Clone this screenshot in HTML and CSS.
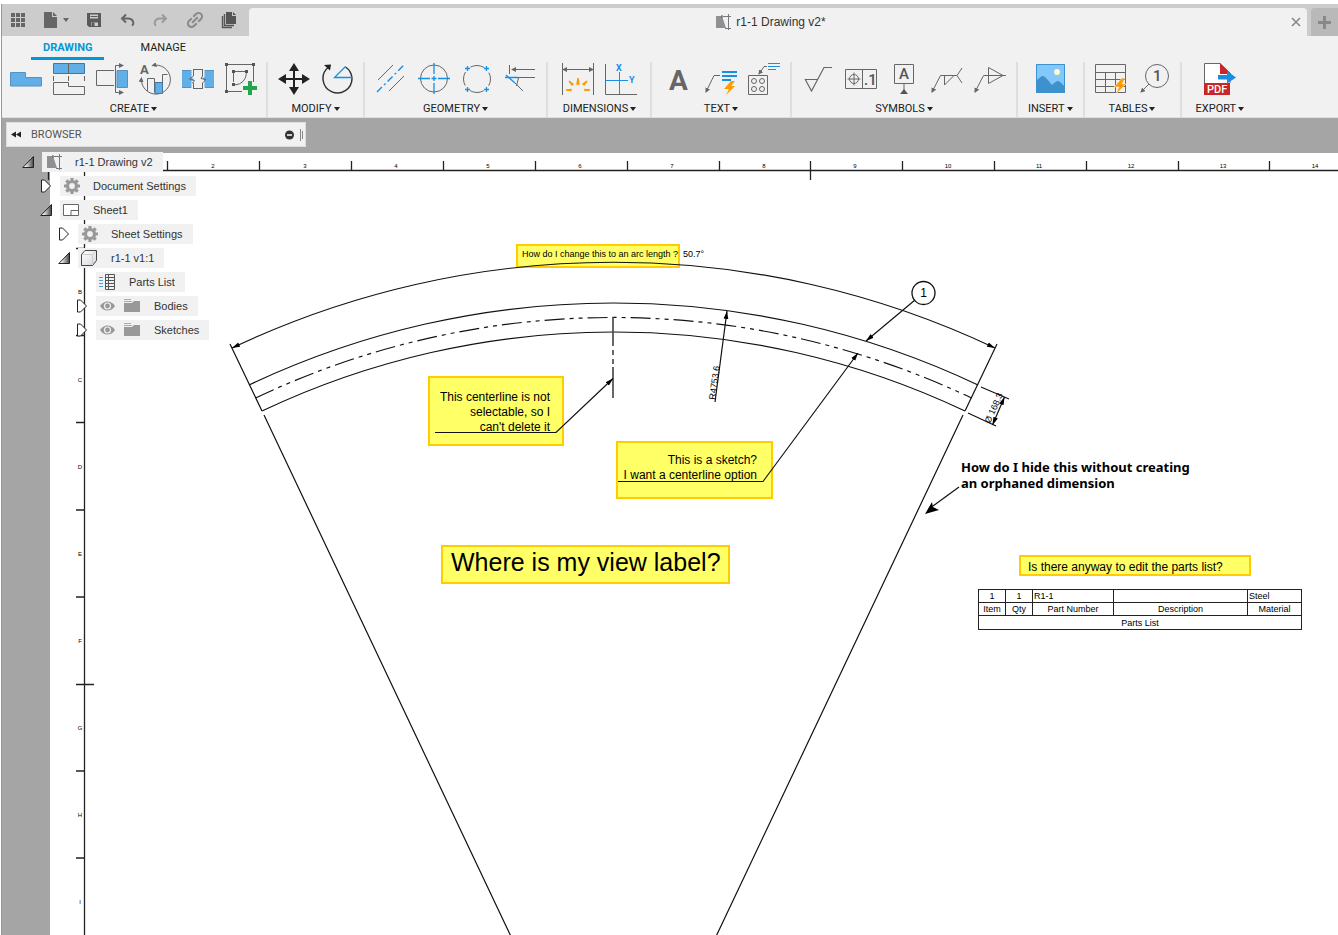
FILE: index.html
```html
<!DOCTYPE html>
<html lang="en">
<head>
<meta charset="utf-8">
<title>r1-1 Drawing v2*</title>
<link rel="stylesheet" href="styles.css">
</head>
<body>
<svg class="defs" width="0" height="0" aria-hidden="true">
  <defs>
    <linearGradient id="shade" x1="0" y1="0" x2="1" y2="0"><stop offset="0.2" stop-color="#fff"/><stop offset="1" stop-color="#444"/></linearGradient>
    <linearGradient id="cubeface" x1="0" y1="0" x2="1" y2="1"><stop offset="0" stop-color="#fff"/><stop offset="1" stop-color="#d3d6da"/></linearGradient>
    <marker id="arrow" markerUnits="userSpaceOnUse" markerWidth="10" markerHeight="8" refX="8" refY="3" orient="auto-start-reverse"><path d="M0 .6 8 3 0 5.4z" fill="#000"/></marker>
    <marker id="tip" markerUnits="userSpaceOnUse" markerWidth="6" markerHeight="6" refX="4" refY="2.5" orient="auto-start-reverse"><path d="M0 0 5 2.5 0 5z" fill="#666"/></marker>
    <symbol id="i-drawing" viewBox="0 0 18 18"><path d="M2 3h6l4 12H2z" fill="#8f9094"/><path d="M9 3.500h8M14.500 1v16M11 15.500h6" fill="none" stroke="#77787b"/><path d="M8 2v3" stroke="#555"/></symbol>
    <symbol id="i-gear" viewBox="0 0 18 18"><circle cx="9" cy="9" r="4.500" fill="none" stroke="#999" stroke-width="3.200"/><path d="M9 1v3M9 14v3M1 9h3M14 9h3M3.300 3.300l2.200 2.200M12.500 12.500l2.200 2.200M3.300 14.700l2.200-2.200M12.500 5.500l2.200-2.200" stroke="#999" stroke-width="3.200"/></symbol>
    <symbol id="i-eye" viewBox="0 0 18 18"><path d="M1 9C4.500 3 12.500 3 16 9C12.500 15 4.500 15 1 9z" fill="#999"/><circle cx="8.500" cy="9" r="3.600" fill="#f1f1f1"/><circle cx="8.500" cy="9" r="2.400" fill="#999"/></symbol>
    <symbol id="i-folder" viewBox="0 0 18 18"><path d="M0 2.500h7M0 4.500h8" stroke="#aaa"/><path d="M0 6h8l2-2h6v11H0z" fill="#999"/></symbol>
    <symbol id="i-open" viewBox="0 0 12 14"><path d="M11.500 1.500v11H.800z" fill="url(#shade)" stroke="#222"/></symbol>
    <symbol id="i-closed" viewBox="0 0 12 14"><path d="M1.500 1h3l6 6-6 6h-3z" fill="#fff" stroke="#222"/></symbol>
  </defs>
</svg>
<div class="app">
  <header class="titlebar">
    <div class="quick">
      <button aria-label="Data panel"><svg width="16" height="16" viewBox="0 0 16 16"><path d="M1 3h14M1 8h14M1 13h14" stroke="#666" stroke-width="4" stroke-dasharray="4 1"/></svg></button>
      <button class="file" aria-label="File"><svg width="24" height="18" viewBox="0 0 24 18"><path d="M1 1h8v5h5v11H1z" fill="#666"/><path d="M10 1l4 4h-4z" fill="#666"/></svg><span class="caret grey"></span></button>
      <button aria-label="Save"><svg width="16" height="16" viewBox="0 0 16 16"><path d="M1 1h14v14H3l-2-2z" fill="#5a5a5a"/><path d="M4 2.500h8v4H4zM5 10.500h7v3.500H5z" fill="#ccc"/><path d="M6 11h2v3H6zM4.500 4.500h7" fill="#5a5a5a" stroke="#5a5a5a"/></svg></button>
      <button aria-label="Undo"><svg width="16" height="16" viewBox="0 0 16 16"><path d="M7 2.500 3 6.500l4 4M3 6.500h6q4 0 5 3t-1 4" fill="none" stroke="#666" stroke-width="2"/></svg></button>
      <button aria-label="Redo"><svg width="16" height="16" viewBox="0 0 16 16"><path d="M9 2.500l4 4-4 4M13 6.500H7q-4 0-5 3t1 4" fill="none" stroke="#999" stroke-width="2"/></svg></button>
      <button aria-label="Link"><svg width="18" height="18" viewBox="0 0 18 18"><g transform="rotate(-45 9 9)" fill="none" stroke="#8a8a8a" stroke-width="2"><path d="M8 5.500H4a3.500 3.500 0 0 0 0 7h4M10 5.500h4a3.500 3.500 0 0 1 0 7h-4M5 9h8"/></g></svg></button>
      <button aria-label="Documents"><svg width="16" height="18" viewBox="0 0 16 18"><path d="M1.500 5v11.500H11M3.500 3v11.500H13" fill="none" stroke="#555" stroke-width="1.400"/><path d="M5 1h6v4h4v8H5z" fill="#555"/><path d="M12 1l3 3h-3z" fill="#555"/></svg></button>
    </div>
    <div class="doctab"><div class="doctitle"><svg width="18" height="18"><use href="#i-drawing"/></svg><span>r1-1 Drawing v2*</span></div>
      <button class="close" aria-label="Close tab"><svg width="10" height="10" viewBox="0 0 10 10"><path d="M1 1l8 8M9 1L1 9" stroke="#888" stroke-width="1.600"/></svg></button></div>
    <button class="newtab" aria-label="New tab"><svg width="13" height="13" viewBox="0 0 13 13"><path d="M6.500 0v13M0 6.500h13" stroke="#888" stroke-width="3"/></svg></button>
  </header>
  <nav class="tabs"><button class="tab active">DRAWING</button><button class="tab">MANAGE</button></nav>
  <div class="ribbon">
    <section class="group first"><div class="tools">
      <button aria-label="Base view"><svg viewBox="0 0 32 32"><path d="M.5 9.500h15v5h16v8.500H.5z" fill="#62aee6" stroke="#5592bf"/></svg></button>
      <button aria-label="Projected view"><svg viewBox="0 0 32 32"><path d="M.5.5h31v10H.5z" fill="#62aee6" stroke="#44779f"/><path d="M15.500 1v10M.5 13v5M15.500 13v5M31.500 13v5M.5 19.500h15v4h16v8H.5z" fill="none" stroke="#666"/></svg></button>
      <button aria-label="Section view"><svg viewBox="0 0 32 32"><path d="M21 7.500h10.500v17H21z" fill="#62aee6" stroke="#5592bf"/><path d="M18 7.500H.5v15H18" fill="none" stroke="#666"/><path d="M27 2.500h-7.500v27H27" fill="none" stroke="#666" marker-start="url(#tip)" marker-end="url(#tip)"/></svg></button>
      <button aria-label="Auxiliary view"><svg viewBox="0 0 32 32"><path d="M2.500 15a14.500 14.500 0 1 0 11-12.500" fill="none" stroke="#666" marker-start="url(#tip)" marker-end="url(#tip)"/><path d="M8.500 28V15.500h7v14M23.500 29V11.500h5" fill="none" stroke="#666"/><path d="M16 19.500h7.500v11H16z" fill="#62aee6" stroke="#44779f"/><text class="g-bold" x="1" y="11">A</text></svg></button>
      <button aria-label="Break view"><svg viewBox="0 0 32 32"><path d="M0 7h9.500v7l2.500 3-2.500 1v7H0zM32 7h-9.500v7l-2 1 2 3v7H32z" fill="#62aee6"/><path d="M0 7.500h9M0 24.500h9M23 7.500h9M23 24.500h9" stroke="#5592bf"/><path d="M12 6.500h8.500M12 25.500h8.500M11.500 6v7l-4 3 5 1.500-2 2.500h1v6M20.500 6v7l-1.500 2.500 5 1-3.500 3.500v6" fill="none" stroke="#666"/></svg></button>
      <button aria-label="Create sketch"><svg viewBox="0 0 32 32"><path d="M3 1.500h24M1.500 3v24M28.500 3v16M3 28.500h14M8.500 10v9M10 8.500h10M21.500 10q-1 11-12 12" fill="none" stroke="#666"/><path d="M0 0h3v3H0zM27 0h3v3h-3zM0 27h3v3H0zM7 7h3v3H7zM20 7h3v3h-3zM7 20h3v3H7z" fill="#555"/><path d="M25 18v14M18 25h14" stroke="#23a54c" stroke-width="4"/></svg></button>
    </div><button class="label">CREATE<span class="caret"></span></button></section>
    <section class="group"><div class="tools">
      <button aria-label="Move"><svg viewBox="0 0 32 32"><path d="M16 5v22M5 16h22" stroke="#222" stroke-width="2"/><path d="M16 0l5 8H11zM16 32l5-8H11zM0 16l8-5v10zM32 16l-8-5v10z" fill="#222"/></svg></button>
      <button aria-label="Rotate"><svg viewBox="0 0 32 32"><path d="M31 15.500A14.500 14.500 0 1 1 7 4.500M24.500 4q6 4 6.500 11.500" fill="none" stroke="#333" stroke-width="1.500"/><path d="M3 2l7-.5-1 6z" fill="#222"/><path d="M24.500 3.500L13.500 14.500H31" fill="none" stroke="#1590e5" stroke-width="1.300"/></svg></button>
    </div><button class="label">MODIFY<span class="caret"></span></button></section>
    <section class="group"><div class="tools">
      <button aria-label="Centerline"><svg viewBox="0 0 32 32"><path d="M3 17L18 2M14 28l15-15" stroke="#666"/><path d="M2 29L29 2" stroke="#1590e5" stroke-dasharray="7 3 2 3" stroke-width="1.400"/></svg></button>
      <button aria-label="Center mark"><svg viewBox="0 0 32 32"><circle cx="16" cy="15.500" r="13.500" fill="none" stroke="#666"/><path d="M16 0v11M16 20v11M0 15.500h12M20 15.500h12M16 13v5M13.500 15.500h5" stroke="#1590e5" stroke-width="1.300"/></svg></button>
      <button aria-label="Center mark pattern"><svg viewBox="0 0 32 32"><circle cx="16" cy="16" r="13.500" fill="none" stroke="#666" stroke-dasharray="14.200 7" stroke-dashoffset="7.100"/><path d="M6.500 3v5M4 5.500h5M25.500 3v5M23 5.500h5M6.500 24v5M4 26.500h5M25.500 24v5M23 26.500h5" stroke="#1590e5" stroke-width="1.300"/></svg></button>
      <button aria-label="Edge extension"><svg viewBox="0 0 32 32"><path d="M5.500 2v9M31 6.500H8" stroke="#666" marker-end="url(#tip)"/><path d="M13 14.500h18M10 19l9 9M14.500 15l-2 8" stroke="#666"/><path d="M1 14.500h13M2 12l9 8" stroke="#1590e5" stroke-width="1.300"/></svg></button>
    </div><button class="label">GEOMETRY<span class="caret"></span></button></section>
    <section class="group wide"><div class="tools">
      <button aria-label="Dimension"><svg viewBox="0 0 32 32"><path d="M.5 0v32M31.500 0v32" stroke="#666"/><path d="M1 6.500h30" stroke="#666" marker-start="url(#tip)" marker-end="url(#tip)"/><path d="M15 21l1-6 1 6zM10 22l-3-4 4 3zM22 22l3-4-4 3zM4 27l5-.5v1zM28 27l-5-.5v1z" fill="#f90" stroke="#f90" stroke-width="1.400"/></svg></button>
      <button aria-label="Ordinate dimension"><svg viewBox="0 0 32 32"><path d="M.5 1v30.500H32" fill="none" stroke="#666"/><path d="M1 17.500h22M14.500 9v22" stroke="#1590e5"/><text class="g-blue" x="11" y="8">X</text><text class="g-blue" x="24" y="20">Y</text></svg></button>
    </div><button class="label">DIMENSIONS<span class="caret"></span></button></section>
    <section class="group"><div class="tools">
      <button aria-label="Text"><svg viewBox="0 0 32 32"><text class="g-big" x="7" y="27">A</text></svg></button>
      <button aria-label="Leader note"><svg viewBox="0 0 32 32"><path d="M15 12.500H9L1 29" fill="none" stroke="#666" marker-end="url(#tip)"/><path d="M17 9h15M17 13h15M17 17h9" stroke="#1590e5" stroke-width="2"/><path d="M26 18l-7 8h5l-3 6 9-9h-4l4-5z" fill="#f90"/></svg></button>
      <button aria-label="Hole note"><svg viewBox="0 0 32 32"><path d="M.5 12.500h19v19H.5z" fill="none" stroke="#666"/><g fill="none" stroke="#666"><circle cx="6" cy="18" r="2.500"/><circle cx="14" cy="18" r="2.500"/><circle cx="6" cy="26" r="2.500"/><circle cx="14" cy="26" r="2.500"/></g><path d="M19 3.500h-3L11 11" fill="none" stroke="#666" marker-end="url(#tip)"/><path d="M20 .5h12M20 3.500h12M20 6.500h8" stroke="#1590e5"/></svg></button>
    </div><button class="label">TEXT<span class="caret"></span></button></section>
    <section class="group"><div class="tools">
      <button aria-label="Surface texture"><svg viewBox="0 0 32 32"><path d="M3 16.500h13M3 16l6.500 12L22 4.500h8" fill="none" stroke="#666" stroke-width="1.200"/></svg></button>
      <button aria-label="Feature control frame"><svg viewBox="0 0 32 32"><path d="M.5 6.500h31v19H.5zM17.500 6v20M9 9.500v13M2.500 16h13" fill="none" stroke="#666"/><circle cx="9" cy="16" r="4.500" fill="none" stroke="#666"/><text class="g-sym" x="19" y="22">.1</text></svg></button>
      <button aria-label="Datum identifier"><svg viewBox="0 0 32 32"><path d="M6.500 1.500h19v19h-19zM16 21v6" fill="none" stroke="#666"/><path d="M12 31l4-5 4 5z" fill="#555"/><text class="g-sym" x="11" y="16">A</text></svg></button>
      <button aria-label="Taper symbol"><svg viewBox="0 0 32 32"><path d="M31 5l-5 7.500 5 7.500" fill="none" stroke="#666"/><path d="M26 12.500H9.500L1 29" fill="none" stroke="#666" marker-end="url(#tip)"/><path d="M13.500 13v9l9-9" fill="none" stroke="#666"/></svg></button>
      <button aria-label="Slope symbol"><svg viewBox="0 0 32 32"><path d="M32 12.500H9.500L1 29" fill="none" stroke="#666" marker-end="url(#tip)"/><path d="M14.500 4.500v16L29 12.500z" fill="none" stroke="#666"/></svg></button>
    </div><button class="label">SYMBOLS<span class="caret"></span></button></section>
    <section class="group"><div class="tools">
      <button aria-label="Insert image"><svg viewBox="0 0 32 32"><path d="M2 1h29v29H2z" fill="#82c8fb"/><path d="M2 18q5-5 7-5t9 9q4-4 6-4t7 6v6H2z" fill="#3d91cd"/><circle cx="23" cy="9" r="3" fill="#fffbd0"/><path d="M2.500 1.500h28v28h-28z" fill="none" stroke="#3d91cd"/></svg></button>
    </div><button class="label">INSERT<span class="caret"></span></button></section>
    <section class="group"><div class="tools">
      <button aria-label="Parts table"><svg viewBox="0 0 32 32"><path d="M.5 1.500h30v28H.5zM.5 9.500h30M.5 16.500h30M.5 23.500h30M10.500 9.500v20M20.500 9.500v20" fill="none" stroke="#666"/><path d="M27 15l-8 9h5l-3 7 10-10h-4l3-6z" fill="#f90" stroke="#f1f1f1" stroke-width=".5"/></svg></button>
      <button aria-label="Balloon"><svg viewBox="0 0 32 32"><circle cx="19" cy="13" r="11.500" fill="none" stroke="#666"/><path d="M11 21l-8 8" stroke="#666" marker-end="url(#tip)"/><text class="g-sym" x="15" y="18">1</text></svg></button>
    </div><button class="label">TABLES<span class="caret"></span></button></section>
    <section class="group last"><div class="tools">
      <button aria-label="Export PDF"><svg viewBox="0 0 32 32"><path d="M.5 20V.5H16L26 10v10" fill="#fff" stroke="#666"/><path d="M16 0l11 11H16z" fill="#c9252b"/><path d="M0 20h26v12H0z" fill="#c9252b"/><path d="M14 12h9V8l9 6.500-9 6v-4h-9z" fill="#1a8ce3"/><text class="g-pdf" x="3" y="30">PDF</text></svg></button>
    </div><button class="label">EXPORT<span class="caret"></span></button></section>
  </div>
  <main class="canvas">
    <div class="sheet"></div>
    <p class="note n-arc">How do I change this to an arc length ?</p>
    <p class="note n-center">This centerline is not<br>selectable, so I<br>can't delete it</p>
    <p class="note n-sketch">This is a sketch?<br>I want a centerline option</p>
    <p class="note n-view">Where is my view label?</p>
    <p class="note n-parts">Is there anyway to edit the parts list?</p>
    <p class="remark">How do I hide this without creating<br>an orphaned dimension</p>
    <table class="parts">
      <colgroup><col class="c1"><col class="c1"><col class="c2"><col class="c3"><col class="c4"></colgroup>
      <tbody>
        <tr><td>1</td><td>1</td><td class="l">R1-1</td><td></td><td class="l">Steel</td></tr>
        <tr><th>Item</th><th>Qty</th><th>Part Number</th><th>Description</th><th>Material</th></tr>
        <tr><th colspan="5">Parts List</th></tr>
      </tbody>
    </table>
    <svg class="drawing" viewBox="2 118 2400 1400" width="2400" height="1400">
      <g fill="none" stroke="#222" stroke-width="1.300">
        <path d="M84 170.500H2402M84.500 154V1518"/>
        <path d="M167.500 161v9M259.500 161v9M351.500 161v9M443.500 161v9M535.500 161v9M627.500 161v9M719.500 161v9M810.500 161v19M902.500 161v9M994.500 161v9M1086.500 161v9M1178.500 161v9M1269.500 161v9"/>
        <path d="M76 248.500h8M76 335.500h8M76 422.500h8M76 510h8M76 597h8M76 684.500h18M76 771h8M76 858h8M48.500 171v9"/>
      </g>
      <g class="ruler">
        <text x="213" y="168">2</text><text x="305" y="168">3</text><text x="396" y="168">4</text><text x="488" y="168">5</text><text x="580" y="168">6</text><text x="672" y="168">7</text><text x="764" y="168">8</text><text x="855" y="168">9</text><text x="948" y="168">10</text><text x="1039" y="168">11</text><text x="1131" y="168">12</text><text x="1223" y="168">13</text><text x="1315" y="168">14</text>
        <text x="80" y="294">B</text><text x="80" y="382">C</text><text x="80" y="469">D</text><text x="80" y="556">E</text><text x="80" y="643">F</text><text x="80" y="730">G</text><text x="80" y="817">H</text><text x="80" y="904">I</text>
      </g>
      <g fill="none" stroke="#111" stroke-width="1.200">
        <path d="M232 348A891.500 891.500 0 0 1 995 348" marker-start="url(#arrow)" marker-end="url(#arrow)"/>
        <path d="M249 385A851 851 0 0 1 978 385M262 411A821.500 821.500 0 0 1 965 411"/>
        <path d="M255.500 398A836 836 0 0 1 971.500 398" stroke-dasharray="20 5 4 5 4 5"/>
        <path d="M230 344l32 67M997 344l-32 67M264 415l350 739M963 415L613 1154"/>
        <path d="M613 317v29M613 350v5M613 359v5M613 367v31" stroke="#444" stroke-width="1.600"/>
        <path d="M435 432.500h121l57-54" marker-end="url(#arrow)"/>
        <path d="M618 481.500h145l95-128.500" marker-end="url(#arrow)"/>
        <path d="M715 402l12-91" marker-end="url(#arrow)"/>
        <path d="M915 300l-49 41" marker-end="url(#arrow)"/>
        <circle cx="923.500" cy="293" r="11.500" stroke-width="1.300"/>
        <path d="M981 387l28 12M968 413l28 13"/>
        <path d="M1004.500 397l-12 28" marker-start="url(#arrow)" marker-end="url(#arrow)"/>
        <path d="M959 487l-26 19"/>
      </g>
      <path d="M925 514l7-12 1 5 6 3z" fill="#000"/>
      <g class="dims"><text x="683" y="257">50.7°</text><text transform="translate(715 400) rotate(-82)">R4753.6</text><text transform="translate(990 424) rotate(-66)">Ø 168.3</text></g>
      <text class="balloon" x="923.500" y="297">1</text>
    </svg>
    <aside class="browser">
      <div class="bhead"><button aria-label="Collapse"><svg width="10" height="7" viewBox="0 0 10 7"><path d="M5 .5v6L0 3.500zM10 .5v6L5 3.500z" fill="#222"/></svg></button><h2>BROWSER</h2><button aria-label="Minimise"><svg width="18" height="12" viewBox="0 0 18 12"><circle cx="4.500" cy="6" r="4.500" fill="#333"/><path d="M2 6h5" stroke="#fff" stroke-width="1.500"/><path d="M15.500 0v12M17.500 2v8" stroke="#888"/></svg></button></div>
      <ul class="tree">
        <li class="d0"><svg class="tg"><use href="#i-open"/></svg><span class="node"><svg><use href="#i-drawing"/></svg>r1-1 Drawing v2</span></li>
        <li class="d1"><svg class="tg"><use href="#i-closed"/></svg><span class="node"><svg><use href="#i-gear"/></svg>Document Settings</span></li>
        <li class="d1"><svg class="tg"><use href="#i-open"/></svg><span class="node"><svg viewBox="0 0 18 18"><path d="M.5 3.500h15v11H.5zM8 14.500v-5h7.500" fill="#fff" stroke="#666"/></svg>Sheet1</span></li>
        <li class="d2"><svg class="tg"><use href="#i-closed"/></svg><span class="node"><svg><use href="#i-gear"/></svg>Sheet Settings</span></li>
        <li class="d2"><svg class="tg"><use href="#i-open"/></svg><span class="node"><svg viewBox="0 0 18 18"><path d="M.5 5.500L4 1.500h11.500v10l-4 5H.5z" fill="url(#cubeface)" stroke="#444"/><path d="M1 5.500h10.500v10.500M11.500 5.500l3.500-3.500" fill="none" stroke="#ccc"/></svg>r1-1 v1:1</span></li>
        <li class="d3"><span class="tg"></span><span class="node"><svg viewBox="0 0 18 18"><path d="M0 4.500h4M0 7.500h4M0 10.500h4M0 13.500h4" stroke="#4ba3e0"/><path d="M6.500 1.500h9v15h-9zM6.500 4.500h9M6.500 7.500h9M6.500 10.500h9M6.500 13.500h9M9.500 1.500v15" fill="none" stroke="#555"/></svg>Parts List</span></li>
        <li class="d3"><svg class="tg"><use href="#i-closed"/></svg><span class="node"><svg class="eye"><use href="#i-eye"/></svg><svg><use href="#i-folder"/></svg>Bodies</span></li>
        <li class="d3"><svg class="tg"><use href="#i-closed"/></svg><span class="node"><svg class="eye"><use href="#i-eye"/></svg><svg><use href="#i-folder"/></svg>Sketches</span></li>
      </ul>
    </aside>
  </main>
</div>
</body>
</html>
```
FILE: styles.css
```css
* { box-sizing: border-box; }
body { margin: 0; padding: 4px 0 0 1px; height: 100vh; overflow: hidden; background: #fff; color: #222; font-family: "Liberation Sans", Arial, sans-serif; font-size: 11px; }
button { margin: 0; padding: 0; border: 0; background: none; color: inherit; font: inherit; }
svg { display: block; flex: none; }
p, h2, ul { margin: 0; padding: 0; }
.defs { position: absolute; }
.app { display: flex; flex-direction: column; height: 100%; border-left: 1px solid #999; background: #f1f1f1; }
.titlebar { display: flex; height: 32px; background: #ccc; }
.quick { display: flex; align-items: center; justify-content: space-between; width: 247px; padding: 0 12px 0 8px; }
.file { display: flex; align-items: center; }
.doctab { display: flex; align-items: center; flex: 1; margin-top: 4px; padding-right: 6px; background: #f1f1f1; border-radius: 4px 4px 0 0; }
.doctitle { display: flex; align-items: center; justify-content: center; gap: 4px; flex: 1; font-size: 12px; color: #333; }
.newtab { display: flex; align-items: center; justify-content: center; width: 27px; margin: 4px 0 0 4px; background: #b9b9b9; border-radius: 4px 0 0 0; }
.tabs { display: flex; gap: 24px; height: 24px; padding-left: 29px; font-family: Roboto, sans-serif; }
.tab { padding: 2px 12px 0; border-bottom: 3px solid transparent; }
.tab.active { border-bottom-color: #0696d7; color: #0696d7; font-weight: 700; }
.ribbon { display: flex; height: 58px; padding-top: 2px; border-bottom: 1px solid #ddd; }
.group { display: flex; flex-direction: column; align-items: center; padding: 0 10px; border-right: 2px solid #dedede; }
.group.first { padding: 0 9px 0 8px; }
.group.wide { padding: 0 13px 0 14px; }
.group.last { border-right: 0; padding: 0 14px; }
.tools { display: flex; gap: 11px; padding-top: 1px; }
.tools svg { width: 32px; height: 32px; }
.label { display: flex; align-items: center; gap: 2px; margin-top: 7px; font: 11px/14px Roboto, sans-serif; white-space: nowrap; }
.caret { border: 3px solid transparent; border-top: 4px solid #222; border-bottom: 0; }
.caret.grey { border-top-color: #666; margin-left: -4px; }
.g-bold { font: 700 13px Roboto, sans-serif; fill: #666; }
.g-big { font: 700 28px Roboto, sans-serif; fill: #666; }
.g-blue { font: 700 9px Roboto, sans-serif; fill: #1590e5; }
.g-sym { font: 500 15px Roboto, sans-serif; fill: #555; }
.g-pdf { font: 500 11px Roboto, sans-serif; fill: #fff; }
.canvas { position: relative; flex: 1; min-height: 0; overflow: hidden; background: #a5a5a5; }
.sheet { position: absolute; inset: 35px 0 0 48px; background: #fff; }
.drawing { position: absolute; left: 0; top: 0; pointer-events: none; }
.note { position: absolute; border: 2px solid #fc0; background: #ff6; color: #000; font-size: 12px; line-height: 15px; white-space: nowrap; }
.n-arc { left: 514px; top: 126px; width: 164px; height: 24px; padding: 1px 4px; font-size: 9px; }
.n-center { left: 426px; top: 258px; width: 136px; height: 70px; padding: 12px 12px 0 4px; text-align: right; }
.n-sketch { left: 614px; top: 323px; width: 157px; height: 58px; padding: 10px 14px 0 0; text-align: right; }
.n-view { left: 439px; top: 427px; width: 289px; height: 39px; padding: 0 8px; font-size: 25px; line-height: 30px; }
.n-parts { left: 1017px; top: 437px; width: 232px; height: 21px; padding: 3px 7px; }
.remark { position: absolute; left: 959px; top: 341px; color: #000; font: 700 13px/16px "Noto Sans", sans-serif; white-space: nowrap; }
.parts { position: absolute; left: 976px; top: 471px; width: 323px; table-layout: fixed; border-collapse: collapse; color: #000; font-size: 9px; line-height: 12px; text-align: center; }
.parts td, .parts th { height: 13px; padding: 0 1px; border: 1px solid #222; font-weight: 400; }
.parts tr:last-child th { height: 14px; }
.parts .l { text-align: left; }
.c1 { width: 27px; } .c2 { width: 81px; } .c3 { width: 134px; } .c4 { width: 54px; }
.ruler text { font-size: 6px; text-anchor: middle; }
.dims text { font-size: 9px; }
.balloon { font-size: 12px; text-anchor: middle; }
.browser { position: absolute; left: 4px; top: 4px; width: 300px; }
.bhead { display: flex; align-items: center; gap: 10px; height: 25px; padding: 0 2px 0 4px; background: #f1f1f1; border: 1px solid #ddd; }
.bhead h2 { flex: 1; color: #555; font: 11px/14px Roboto, sans-serif; }
.tree { padding-top: 3px; list-style: none; }
.tree li { display: flex; align-items: center; gap: 8px; height: 24px; color: #333; }
.tg { width: 12px; height: 14px; }
.d0 { padding-left: 16px; } .d1 { padding-left: 34px; } .d2 { padding-left: 52px; } .d3 { padding-left: 70px; }
.node { display: flex; align-items: center; gap: 12px; height: 20px; padding: 0 10px 0 3px; background: #f1f1f1; white-space: nowrap; }
.node svg { width: 18px; height: 18px; }
.node .eye { margin-right: -5px; }
```
